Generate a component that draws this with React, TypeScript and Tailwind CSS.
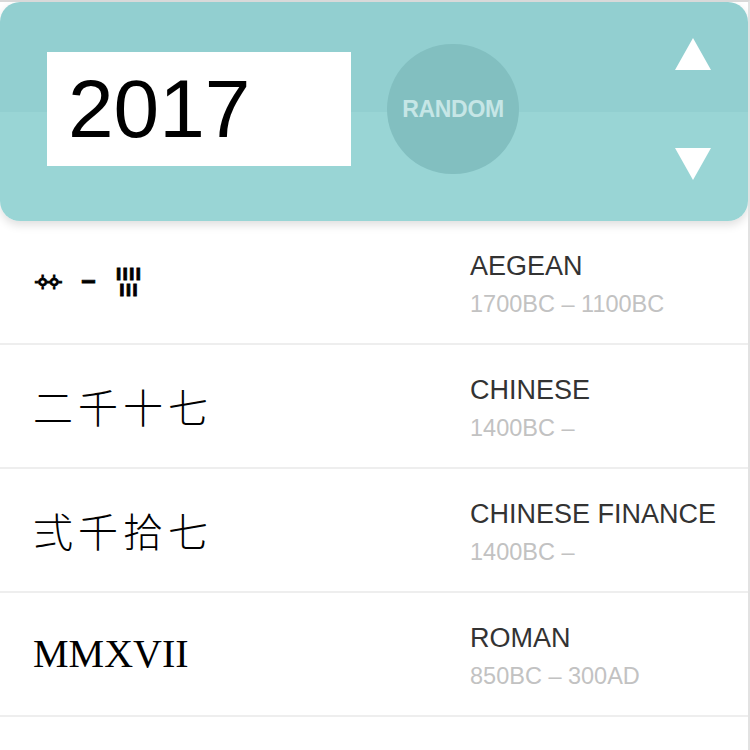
import React from "react";

function Tri({ up }: { up?: boolean }) {
  return (
    <svg width="36" height="32" viewBox="0 0 36 32" className="block">
      {up ? <polygon points="18,0 36,32 0,32" fill="#ffffff" /> : <polygon points="0,0 36,0 18,32" fill="#ffffff" />}
    </svg>
  );
}

const rows = [
  { kind: "aegean", label: "𐄣𐄐𐄍", name: "AEGEAN", range: "1700BC – 1100BC" },
  { kind: "cjk", label: "二千十七", name: "CHINESE", range: "1400BC –" },
  { kind: "cjk", label: "弍千拾七", name: "CHINESE FINANCE", range: "1400BC –" },
  { kind: "roman", label: "MMXVII", name: "ROMAN", range: "850BC – 300AD" },
];

export default function App() {
  return (
    <div className="w-[750px] h-[750px] overflow-hidden bg-white border-t-2 border-t-[#d9d9d9] border-r-2 border-r-[#e2e2e2] font-['Liberation_Sans',Arial,sans-serif]">
      <div className="relative z-10 h-[219px] rounded-[20px] bg-[linear-gradient(to_bottom,#92cfd0_50%,#99d5d5_50%)] shadow-[0_4px_10px_rgba(0,0,0,0.13)] flex items-center pl-[47px] pr-[37px] pb-[5px]">
        <div className="w-[304px] h-[114px] bg-white flex items-center pl-[21px]">
          <span className="text-[82px] leading-none text-black">2017</span>
        </div>
        <div className="ml-[36px] w-[132px] h-[130px] rounded-full bg-[#82bfc0] flex items-center justify-center">
          <span className="text-[23px] font-bold text-[#c6e6e6] tracking-[-0.3px]">RANDOM</span>
        </div>
        <div className="ml-auto h-[142px] flex flex-col justify-between">
          <Tri up />
          <Tri />
        </div>
      </div>
      {rows.map((r, i) => (
        <div key={i} className="h-[124px] border-b-2 border-b-[#eeeeee] flex items-center">
          <div className="w-[470px] pl-[33px]">
            {r.kind === "aegean" && (
              <span className="-ml-[3px] text-[41px] leading-none text-black tracking-[3px] [-webkit-text-stroke:0.8px_#000] font-['DejaVu_Sans','Noto_Sans',sans-serif]">{r.label}</span>
            )}
            {r.kind === "cjk" && (
              <span className="text-[40px] font-light tracking-[5px] text-black font-['Noto_Sans_CJK_SC',sans-serif]">{r.label}</span>
            )}
            {r.kind === "roman" && <span className="text-[40px] text-black font-['Liberation_Serif','Times_New_Roman',serif]">{r.label}</span>}
          </div>
          <div className="flex flex-col pt-[6px]">
            <span className="text-[27px] leading-[34px] text-[#333333]">{r.name}</span>
            <span className="text-[23.5px] leading-[34px] mt-[4px] text-[#c2c2c2]">{r.range}</span>
          </div>
        </div>
      ))}
    </div>
  );
}
